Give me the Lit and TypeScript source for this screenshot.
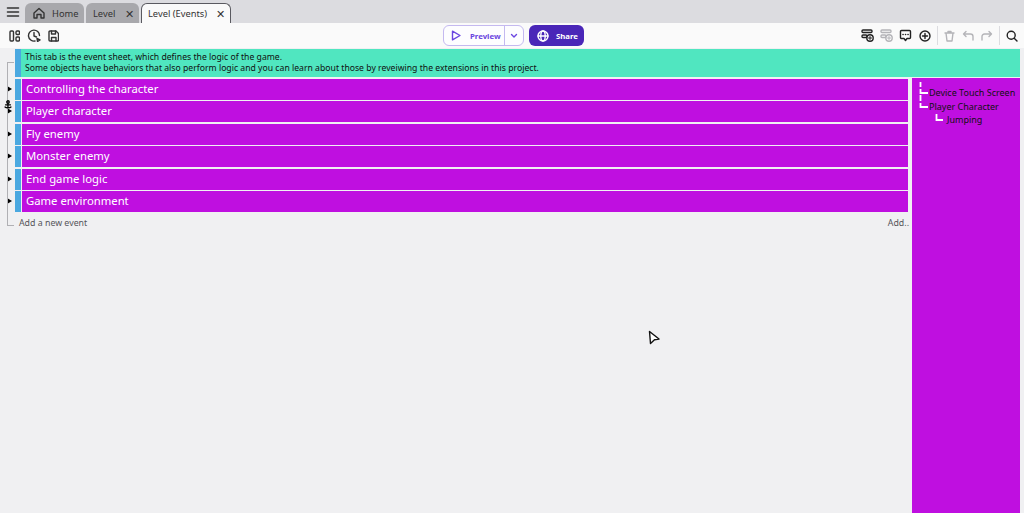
import { LitElement, html, css, svg } from "lit";
import { customElement } from "lit/decorators.js";

const events = ["Controlling the character", "Player character", "Fly enemy", "Monster enemy", "End game logic", "Game environment"];
const ic = (w: number, h: number, body: unknown, cls = "") => html`<svg class=${cls} width=${w} height=${h} viewBox="0 0 ${w} ${h}" fill="none" stroke="currentColor" stroke-width="1.4" stroke-linecap="round" stroke-linejoin="round">${body}</svg>`;

@customElement("app-root")
export class AppRoot extends LitElement {
  static styles = css`
    :host { display: flex; flex-direction: column; width: 1024px; height: 513px; overflow: hidden; background: #f0f0f2; font-family: "Noto Sans", sans-serif; position: relative; color: #222; }
    svg { display: block; flex: none; }
    .tabbar { height: 23px; background: #dcdce0; display: flex; align-items: flex-end; flex: none; }
    .menu { width: 25px; height: 23px; display: flex; align-items: center; justify-content: center; color: #333; }
    .tab { height: 20px; box-sizing: border-box; background: #a8a8ac; border-radius: 6px 6px 0 0; margin-right: 2px; display: flex; align-items: center; font-size: 9.3px; color: #333; padding-left: 8px; }
    .tab.home { width: 59px; gap: 7px; }
    .tab.level { width: 53px; justify-content: space-between; padding-right: 5px; padding-left: 7px; }
    .tab.active { width: 90px; background: #fafafa; border: 1px solid #5a5a60; border-bottom: none; justify-content: space-between; padding-right: 5px; padding-left: 6px; color: #333; }
    .x { font-size: 11px; line-height: 1; }
    .toolbar { height: 25px; background: #fafafa; display: flex; align-items: center; flex: none; padding: 0 6px 0 9px; position: relative; }
    .left, .right { display: flex; align-items: center; }
    .left { gap: 7px; color: #333; }
    .center { position: absolute; left: 443px; top: 2px; display: flex; gap: 5px; height: 21px; }
    .preview { display: flex; width: 81px; box-sizing: border-box; border: 1px solid #c4b9f0; border-radius: 6px; color: #6a45e0; font-size: 7.8px; font-weight: 700; background: #fdfdff; }
    .pv-main { width: 61px; display: flex; align-items: center; padding-left: 7px; gap: 9px; border-right: 1px solid #c4b9f0; box-sizing: border-box; }
    .pv-arrow { flex: 1; display: flex; align-items: center; justify-content: center; }
    .share { width: 55px; display: flex; align-items: center; gap: 7px; padding-left: 8px; box-sizing: border-box; border-radius: 6px; background: #4a26b8; color: #fff; font-size: 7.8px; font-weight: 700; }
    .right { margin-left: auto; gap: 6px; color: #222; }
    .sep { width: 1px; height: 19px; background: #dcdce0; }
    .dim { color: #b4b4b8; }
    .nudge { margin-left: 1px; }
    .body { flex: 1; display: flex; min-height: 0; position: relative; padding: 1px 4px 0 15px; }
    .main { flex: 1; min-width: 0; display: flex; flex-direction: column; gap: 1px; }
    .banner { height: 28px; margin-right: -108px; display: flex; background: #50e6c0; position: relative; z-index: 1; font-size: 8.66px; line-height: 11px; color: #111; }
    .strip { width: 6px; background: #4aa8e0; flex: none; }
    .banner-text { padding: 3px 0 0 4px; white-space: nowrap; }
    .rows { display: flex; flex-direction: column; gap: 1.4px; padding-top: 1px; margin-right: 4px; }
    .row { height: 21px; display: flex; position: relative; }
    .row-main { flex: 1; background: #bf0fe0; color: #fff; font-size: 11.3px; display: flex; align-items: center; padding: 0 0 2px 4px; box-sizing: border-box; }
    .row-strip { width: 6px; margin-right: 1px; background: #4aa8e0; flex: none; }
    .arrow { position: absolute; left: -8px; top: 7px; width: 0; height: 0; border-left: 5px solid #000; border-top: 3px solid transparent; border-bottom: 3px solid transparent; }
    .add { display: flex; justify-content: space-between; font-size: 8.8px; color: #55555a; padding: 4px 3px 0 4px; line-height: 12px; }
    .side { width: 108px; flex: none; margin-top: 29px; background: #bf0fe0; color: #111; font-size: 9px; position: relative; }
    .node { position: absolute; white-space: nowrap; line-height: 12px; }
    .n1 { left: 17px; top: 9px; }
    .n2 { left: 17px; top: 23px; }
    .n3 { left: 35px; top: 36px; }
    .guides { position: absolute; left: 0; top: 0; color: #fff; }
    .rail { position: absolute; left: 7px; top: 14px; width: 7px; height: 164px; border: 1px solid #b0b0b4; border-right: none; box-sizing: border-box; }
    .anchor { position: absolute; left: 4px; top: 100px; color: #000; }
    .cursor { position: absolute; left: 648px; top: 330px; color: #111; }
  `;
  render() {
    return html`
      <div class="tabbar">
        <div class="menu">${ic(14, 12, svg`<path stroke-width="1.6" d="M1.5 2H12.5M1.5 6H12.5M1.5 10H12.5"/>`)}</div>
        <div class="tab home">
          ${ic(12, 12, svg`<path d="M1 6L6 1.5L11 6V11H8V7.5H4V11H1Z"/>`)}
          <span>Home</span>
        </div>
        <div class="tab level"><span>Level</span><span class="x">✕</span></div>
        <div class="tab active"><span>Level (Events)</span><span class="x">✕</span></div>
      </div>
      <div class="toolbar">
        <div class="left">
          ${ic(11, 12, svg`<rect x="1" y="1" width="3.5" height="10" rx="1"/><rect x="7" y="1" width="3.5" height="3.5" rx="1"/><rect x="7" y="7" width="3.5" height="4" rx="1"/>`)}
          ${ic(14, 13, svg`<path d="M12.5 6.5A5.5 5.5 0 1 0 8 12"/><path d="M7 3.5V7L9.5 8"/><path d="M10 9.5L13 11L10.5 12.5Z"/>`)}
          ${ic(11, 12, svg`<path d="M2 1H8L10.5 3.5V10A1 1 0 0 1 9.5 11H2A1 1 0 0 1 1 10V2A1 1 0 0 1 2 1Z"/><path d="M3.5 1V4H7.5V1"/><path d="M3.5 11V7.5H8V11"/>`)}
        </div>
        <div class="center">
          <div class="preview">
            <div class="pv-main">
              ${ic(10, 11, svg`<path d="M1.5 1.2L9 5.5L1.5 9.8Z"/>`)}
              <span>Preview</span>
            </div>
            <div class="pv-arrow">${ic(8, 6, svg`<path d="M1.5 1.5L4 4L6.5 1.5"/>`)}</div>
          </div>
          <div class="share">
            ${ic(12, 12, svg`<circle cx="6" cy="6" r="5"/><ellipse cx="6" cy="6" rx="2.2" ry="5"/><path d="M1 6H11"/>`)}
            <span>Share</span>
          </div>
        </div>
        <div class="right">
          ${ic(13, 13, svg`<rect x="1" y="1" width="10" height="2.5" rx="1"/><rect x="1" y="6" width="5" height="2.5" rx="1"/><circle cx="9" cy="9" r="3.2"/><path stroke-width="1" d="M9 7.5V10.5M7.5 9H10.5"/>`)}
          ${ic(13, 13, svg`<rect x="1" y="1" width="10" height="2.5" rx="1"/><rect x="1" y="6" width="5" height="2.5" rx="1"/><circle cx="9" cy="9" r="3.2"/><path stroke-width="1" d="M9 7.5V10.5M7.5 9H10.5"/>`, "dim")}
          ${ic(13, 13, svg`<path d="M2.5 1.5H10.5A1 1 0 0 1 11.5 2.5V8.5A1 1 0 0 1 10.5 9.5H8L6.5 11.5L5 9.5H2.5A1 1 0 0 1 1.5 8.5V2.5A1 1 0 0 1 2.5 1.5Z"/><path stroke-width="1.6" d="M4 5.5H4.1M6.5 5.5H6.6M9 5.5H9.1"/>`)}
          ${ic(12, 12, svg`<circle cx="6" cy="6" r="5"/><path d="M6 3.5V8.5M3.5 6H8.5"/>`, "nudge")}
          <div class="sep"></div>
          ${ic(11, 12, svg`<path d="M1 3H10M4 3V1.5H7V3M2 3L3 11H8L9 3"/>`, "dim")}
          ${ic(12, 11, svg`<path d="M4 1.5L1.5 4L4 6.5M1.5 4H8.5A2.5 2.5 0 0 1 11 6.5V10"/>`, "dim nudge")}
          ${ic(12, 11, svg`<path d="M8 1.5L10.5 4L8 6.5M10.5 4H3.5A2.5 2.5 0 0 0 1 6.5V10"/>`, "dim nudge")}
          <div class="sep"></div>
          ${ic(12, 12, svg`<circle cx="5.2" cy="5.2" r="4"/><path d="M8.2 8.2L11 11"/>`)}
        </div>
      </div>
      <div class="body">
        <div class="main">
          <div class="banner">
            <div class="strip"></div>
            <div class="banner-text">This tab is the event sheet, which defines the logic of the game.<br />Some objects have behaviors that also perform logic and you can learn about those by reveiwing the extensions in this project.</div>
          </div>
          <div class="rows">
            ${events.map((e) => html`<div class="row"><div class="arrow"></div><div class="row-strip"></div><div class="row-main">${e}</div></div>`)}
          </div>
          <div class="add"><span>Add a new event</span><span>Add..</span></div>
        </div>
        <div class="side">
          <svg class="guides" width="40" height="45" viewBox="0 0 40 45" fill="none" stroke="currentColor" stroke-width="1.8">
            <path d="M8.5 4V9M8.5 11V15H16"/>
            <path d="M8.5 17V23M8.5 25V29H16"/>
            <path d="M24.5 36V42H31"/>
          </svg>
          <div class="node n1">Device Touch Screen</div>
          <div class="node n2">Player Character</div>
          <div class="node n3">Jumping</div>
        </div>
        <div class="rail"></div>
      </div>
      <div class="anchor">${ic(8, 9, svg`<circle cx="4" cy="2" r="1.2"/><path stroke-width="1.2" d="M4 3.2V8M1.5 4.8H6.5M1 7C2 8.2 6 8.2 7 7"/>`)}</div>
      <div class="cursor">${ic(12, 15, svg`<path fill="#fff" d="M1.5 1.5L11 9L6.5 9.8L2.5 13.5Z"/>`)}</div>
    `;
  }
}
